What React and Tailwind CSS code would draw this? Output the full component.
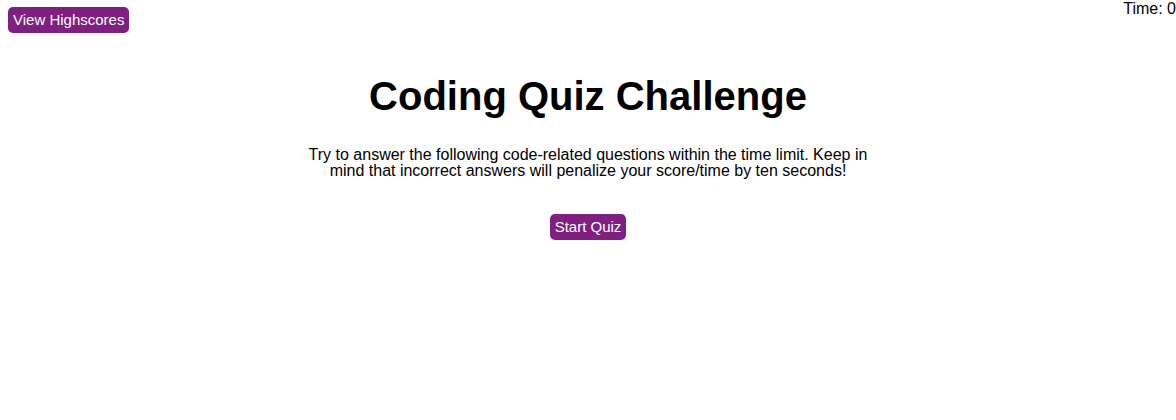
export default function App() {
  return (
    <div className="bg-white min-h-screen text-black font-['Liberation_Sans',Arial,sans-serif]">

      {/* Header */}
      <header className="flex justify-between items-start">
        <button className="ml-2 mt-[7px] bg-[#7f2081] text-white text-[15px] leading-[26px] px-[5px] rounded-[5px]">
          View Highscores
        </button>
        <p className="text-base leading-[18px]">Time: 0</p>
      </header>

      {/* Intro */}
      <main className="flex flex-col items-center text-center">
        <h1 className="mt-[40px] text-[40px] leading-[46px] font-bold">
          Coding Quiz Challenge
        </h1>

        <p className="mt-[28px] w-[580px] text-base leading-4">
          Try to answer the following code-related questions within the time limit. Keep in mind that incorrect answers will penalize your score/time by ten seconds!
        </p>

        <button className="mt-[35px] bg-[#7f2081] text-white text-[15px] leading-[26px] px-[5px] rounded-[5px]">
          Start Quiz
        </button>
      </main>

    </div>
  )
}
